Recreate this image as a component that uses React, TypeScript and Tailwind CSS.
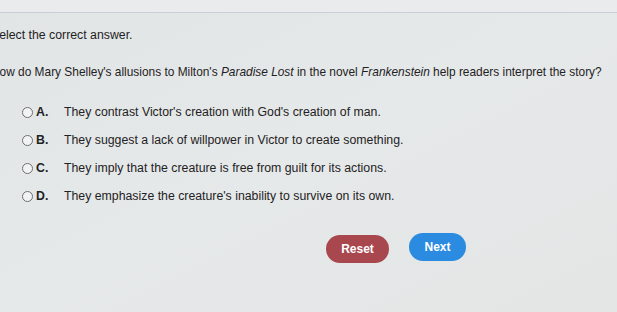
import { useState } from "react";

const options = [
  { key: "A", text: "They contrast Victor's creation with God's creation of man." },
  { key: "B", text: "They suggest a lack of willpower in Victor to create something." },
  { key: "C", text: "They imply that the creature is free from guilt for its actions." },
  { key: "D", text: "They emphasize the creature's inability to survive on its own." },
];

export default function App() {
  const [selected, setSelected] = useState<string | null>(null);

  return (
    <div
      className="w-[617px] h-[312px] overflow-hidden bg-gradient-to-br from-[#e2e5e6] via-[#e6e9e9] to-[#e3e6e5] text-[#1f2224]"
      style={{ fontFamily: '"Liberation Sans", Arial, sans-serif' }}
    >
      <div className="h-[13px] border-b border-[#c9cfd8] bg-[#e9ebec]" />

      <div className="-ml-[9px] pt-[15px]">
        <p className="text-[12.3px] leading-[14px]">Select the correct answer.</p>
        <p className="mt-[23px] text-[11.9px] leading-[14px] whitespace-nowrap">
          How do Mary Shelley's allusions to Milton's <i>Paradise Lost</i> in the novel{" "}
          <i>Frankenstein</i> help readers interpret the story?
        </p>
      </div>

      <div className="mt-[26px] flex flex-col gap-[14px] pl-[22px]">
        {options.map((o) => (
          <button
            key={o.key}
            onClick={() => setSelected(o.key)}
            className="flex items-center h-[14px] text-left text-[12.3px]"
          >
            <span className="w-[11px] h-[11px] rounded-full border border-[#6b7074] bg-[#f2f3f3] flex items-center justify-center">
              {selected === o.key && <span className="w-[5px] h-[5px] rounded-full bg-[#2a8de0]" />}
            </span>
            <span className="ml-[3px] w-[28px] font-bold">{o.key}.</span>
            <span>{o.text}</span>
          </button>
        ))}
      </div>

      <div className="mt-[30px] flex items-start pl-[326px] gap-[20px]">
        <button
          onClick={() => setSelected(null)}
          className="mt-[2px] w-[63px] h-[28px] rounded-full bg-[#a9474f] text-white text-[12px] font-bold"
        >
          Reset
        </button>
        <button className="w-[57px] h-[28px] rounded-full bg-[#2b8be0] text-white text-[12px] font-bold">
          Next
        </button>
      </div>
    </div>
  );
}
